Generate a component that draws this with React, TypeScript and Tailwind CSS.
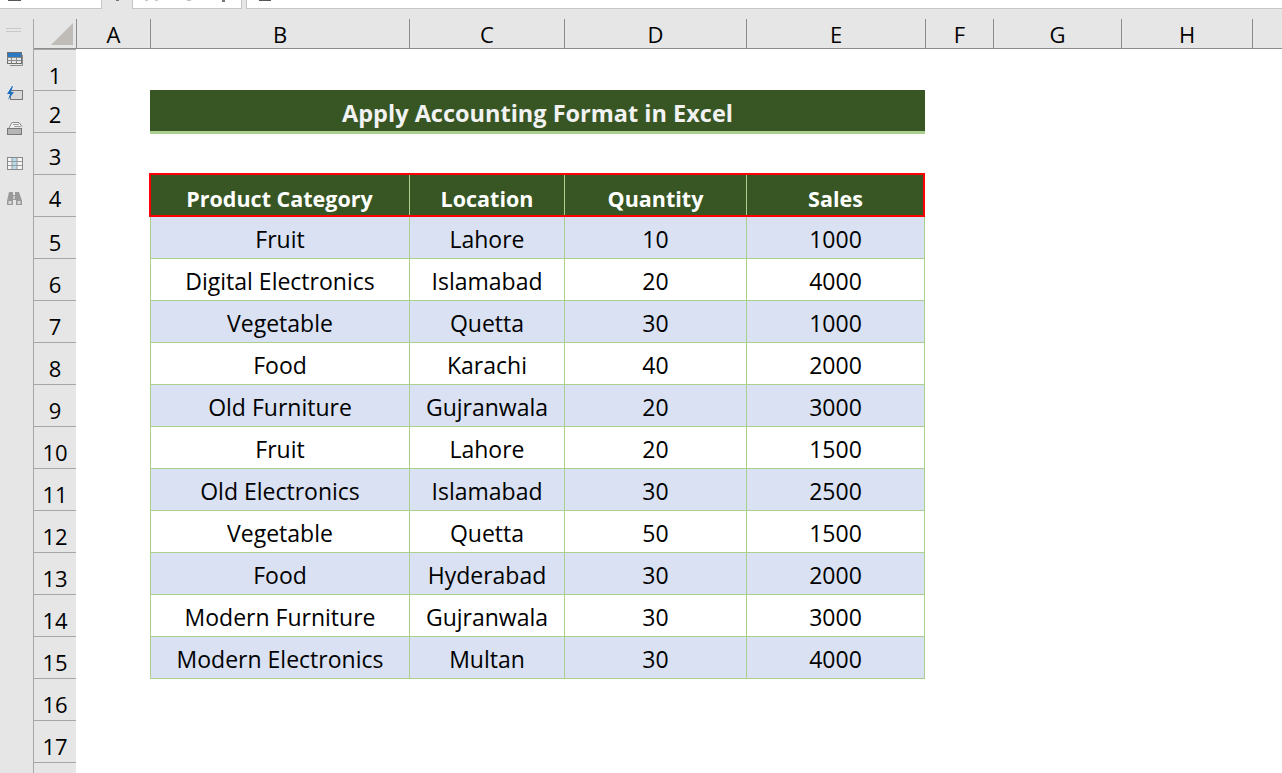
const cols = ["A", "B", "C", "D", "E", "F", "G", "H", ""];
const rows = [
  ["Fruit", "Lahore", "10", "1000"],
  ["Digital Electronics", "Islamabad", "20", "4000"],
  ["Vegetable", "Quetta", "30", "1000"],
  ["Food", "Karachi", "40", "2000"],
  ["Old Furniture", "Gujranwala", "20", "3000"],
  ["Fruit", "Lahore", "20", "1500"],
  ["Old Electronics", "Islamabad", "30", "2500"],
  ["Vegetable", "Quetta", "50", "1500"],
  ["Food", "Hyderabad", "30", "2000"],
  ["Modern Furniture", "Gujranwala", "30", "3000"],
  ["Modern Electronics", "Multan", "30", "4000"],
];
const heads = ["Product Category", "Location", "Quantity", "Sales"];

function RowHead({ n, pad = "pt-[8px]" }: { n?: number; pad?: string }) {
  return (
    <div className={`col-start-1 flex items-center justify-center border-t border-[#a6a6a6] bg-[#e6e6e6] text-[22px] text-black ${pad}`}>
      {n}
    </div>
  );
}

function RailIcon({ children }: { children: React.ReactNode }) {
  return (
    <svg width="18" height="16" viewBox="0 0 18 16" fill="none">
      {children}
    </svg>
  );
}

export default function App() {
  return (
    <div className="flex h-[773px] w-[1282px] flex-col overflow-hidden bg-white font-['Open_Sans','Liberation_Sans',sans-serif]">
      <div className="flex h-[19px] shrink-0 items-start bg-[#e6e6e6]">
        <div className="h-[9px] w-[102px] border-r border-b border-[#c6c6c6] bg-white pl-[8px]">
          <div className="h-[1px] w-[13px] bg-[#555555]"></div>
        </div>
        <div className="ml-[14px] h-[1px] w-[3px] bg-[#777777]"></div>
        <div className="ml-[13px] flex h-[9px] w-[110px] gap-[7px] border-x border-b border-[#c6c6c6] bg-white pl-[12px]">
          <div className="h-[1px] w-[3px] bg-[#c8c8c8]"></div>
          <div className="h-[1px] w-[3px] bg-[#c8c8c8]"></div>
          <div className="ml-[22px] h-[1px] w-[4px] bg-[#c0c0c0]"></div>
          <div className="ml-[24px] h-[2px] w-[3px] bg-[#777777]"></div>
        </div>
        <div className="ml-[4px] h-[9px] flex-1 border-l border-b border-[#c6c6c6] bg-white pl-[12px]">
          <div className="h-[1px] w-[12px] bg-[#555555]"></div>
        </div>
      </div>
      <div className="flex min-h-0 flex-1">
        <div className="flex w-[34px] shrink-0 flex-col items-start border-r border-[#a6a6a6] bg-[#e6e6e6] pt-[9px] pl-[6px]">
          <div className="h-[4px] w-[15px] border-y border-[#c8c8c8]"></div>
          <div className="mt-[19px] flex flex-col items-start gap-[19px]">
            <RailIcon>
              <g transform="translate(0 1)">
                <rect x="1" y="0" width="15" height="5" fill="#2b79c2" />
                <rect x="1.500" y="0.500" width="14" height="11" stroke="#6f6f6f" />
                <path d="M1 5.500h14M1 8.500h14M5.500 5v6M10.500 5v6" stroke="#8a8a8a" />
                <path d="M16.500 3v10.500H4" stroke="#8a8a8a" />
              </g>
            </RailIcon>
            <RailIcon>
              <rect x="4.500" y="4.500" width="12" height="9" fill="#d8d8d8" stroke="#777777" />
              <path d="M6 0 1 8h3l-2 6 6-8H5l2-6z" fill="#1d6fc0" />
            </RailIcon>
            <RailIcon>
              <path d="M3 7 6 1.500h7l3 4" stroke="#8a8a8a" fill="#f2f2f2" />
              <rect x="1.500" y="7.500" width="14" height="6" fill="#b5b5b5" stroke="#777777" />
              <path d="M7 3.500h6M8 5.500h7" stroke="#a0a0a0" />
            </RailIcon>
            <RailIcon>
              <rect x="1.500" y="1.500" width="15" height="12" fill="#f4f4f4" stroke="#8a8a8a" />
              <rect x="6" y="2" width="5" height="11" fill="#b4dcec" />
              <path d="M6 2v11M11 2v11M2 5.500h14M2 9.500h14" stroke="#9a9a9a" />
            </RailIcon>
            <RailIcon>
              <path d="M3 1h4v3h2V1h4l3 9v4h-6V9H7v5H1v-4z" fill="#9a9a9a" />
              <rect x="7" y="5" width="2" height="3" fill="#c8c8c8" />
              <rect x="2.500" y="10" width="3" height="3" fill="#d8d8d8" />
              <rect x="11.500" y="10" width="3" height="3" fill="#d8d8d8" />
            </RailIcon>
          </div>
        </div>
        <div className="grid flex-1 grid-cols-[42px_74px_259px_155px_182px_179px_68px_128px_131px_30px] grid-rows-[30px_41px_repeat(17,42px)] content-start text-[23px] leading-[28px] text-black">
          <div className="relative border-b border-[#8c8c8c] bg-[#e6e6e6]">
            <svg className="absolute right-[3px] bottom-[3px]" width="22" height="22" viewBox="0 0 22 22">
              <path d="M22 0v22H0z" fill="#bfbcb8" />
            </svg>
          </div>
          {cols.map((c, i) => (
            <div
              key={i}
              className="flex items-center justify-center border-b border-l border-[#8c8c8c] bg-[#e6e6e6] pt-[1px] text-[22px]"
            >
              {c}
            </div>
          ))}
          <RowHead n={1} pad="pt-[10px]" />
          <RowHead n={2} pad="pt-[4px]" />
          <div className="col-span-4 col-start-3 mb-[-2px] flex items-center justify-center border-b-[3px] border-[#a9d08e] bg-[#375623] pt-[5px] text-[23.500px] font-bold text-[#f2f2f2]">
            Apply Accounting Format in Excel
          </div>
          <RowHead n={3} pad="pt-[4px]" />
          <RowHead n={4} pad="pt-[4px]" />
          <div className="relative z-10 col-span-4 col-start-3 mr-[1px] grid grid-cols-[259px_155px_182px_178px] bg-[#375623] outline-2 -outline-offset-1 outline-[#ff0000]">
            {heads.map((h) => (
              <div
                key={h}
                className="flex items-center justify-center border-l border-[#a9d08e] pt-[8px] text-[21.500px] font-bold text-white first:border-l-0"
              >
                {h}
              </div>
            ))}
          </div>
          {rows.map((r, ri) => (
            <div key={ri} className="contents">
              <RowHead n={ri + 5} />
              {r.map((t, ci) => (
                <div
                  key={ci}
                  className={`flex items-center justify-center border-t border-l border-[#a9d08e] pt-[2px] ${ci === 0 ? "col-start-3" : ""} ${ci === 3 ? "border-r" : ""} ${ri === 10 ? "mb-[-1px] border-b" : ""} ${ri % 2 === 0 ? "bg-[#d9e1f2]" : "bg-white"}`}
                >
                  {t}
                </div>
              ))}
            </div>
          ))}
          <RowHead n={16} />
          <RowHead n={17} />
          <RowHead />
        </div>
      </div>
    </div>
  );
}
